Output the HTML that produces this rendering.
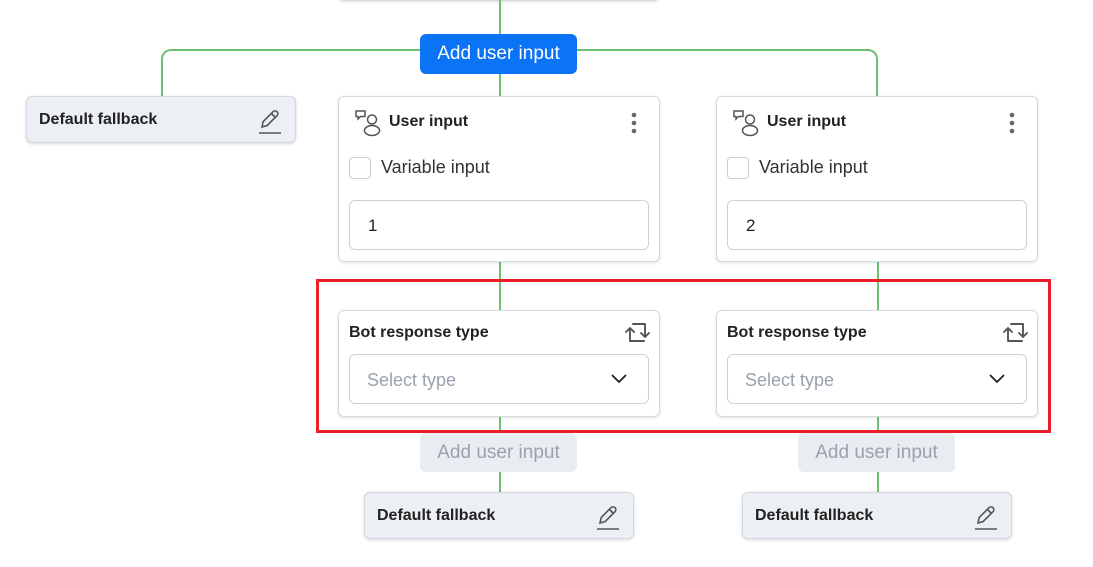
<!DOCTYPE html>
<html><head><meta charset="utf-8"><style>
*{box-sizing:border-box;margin:0;padding:0}
body{width:1093px;height:567px;background:#fff;position:relative;overflow:hidden;font-family:"Liberation Sans",sans-serif;color:#222}
.a{position:absolute}
.g{position:absolute;background:#6cc070}
.card{position:absolute;background:#fff;border:1px solid #d5d9e0;border-radius:6px;box-shadow:0 1px 3px rgba(0,0,0,.12)}
.fb{position:absolute;background:#eceff3;border:1px solid #d3d7de;border-radius:6px;box-shadow:0 1px 3px rgba(0,0,0,.15);font-weight:bold;font-size:16px;padding:14px 0 0 12px}
.fb svg{position:absolute;right:12px;top:10px}
.t{font-weight:bold;font-size:16px}
.inp{position:absolute;border:1px solid #cdd2d9;border-radius:6px;background:#fff;font-size:17px}
</style></head><body>
<div class="card" style="left:338px;top:-20px;width:322px;height:21px"></div>
<div class="g" style="left:499px;top:0;width:2px;height:35px"></div>
<div class="a" style="left:161px;top:49px;width:340px;height:48px;border:2px solid #6cc070;border-right:none;border-bottom:none;border-top-left-radius:10px"></div>
<div class="a" style="left:499px;top:49px;width:379px;height:48px;border:2px solid #6cc070;border-left:none;border-bottom:none;border-top-right-radius:10px"></div>
<div class="g" style="left:499px;top:74px;width:2px;height:22px"></div>
<div class="a" style="left:420px;top:34px;width:157px;height:40px;background:#0b73f6;border-radius:6px;color:#fff;font-size:19px;text-align:center;line-height:40px">Add user input</div>
<div class="fb" style="left:26px;top:96px;width:270px;height:47px">Default fallback<svg width="26" height="28" viewBox="0 0 26 28" fill="none" stroke="#555" stroke-width="1.6"><path d="M5 20l1.2-5.5L16 4.7a2.8 2.8 0 014 4L10.2 18.5z M14.5 6.5l4 4"/><path d="M2 26h22"/></svg></div>

<div class="g" style="left:499px;top:262px;width:2px;height:48px"></div>
<div class="g" style="left:877px;top:262px;width:2px;height:48px"></div>
<div class="g" style="left:499px;top:417px;width:2px;height:75px"></div>
<div class="g" style="left:877px;top:417px;width:2px;height:75px"></div>

<div class="card" style="left:338px;top:96px;width:322px;height:166px"></div>
<div class="card" style="left:716px;top:96px;width:322px;height:166px"></div>
<div class="card" style="left:338px;top:310px;width:322px;height:107px"></div>
<div class="card" style="left:716px;top:310px;width:322px;height:107px"></div>

<svg class="a" style="left:354px;top:109px" width="28" height="28" viewBox="0 0 28 28" fill="none" stroke="#555" stroke-width="1.5"><path d="M2 2h9v5.5H6.5L4 10V7.5H2z"/><circle cx="18" cy="10.5" r="4.5"/><ellipse cx="18" cy="21.5" rx="7.5" ry="5"/></svg>
<div class="a t" style="left:389px;top:113px">User input</div>
<svg class="a" style="left:630px;top:111px" width="8" height="24"><circle cx="4" cy="4" r="2.3" fill="#666"/><circle cx="4" cy="12" r="2.3" fill="#666"/><circle cx="4" cy="20" r="2.3" fill="#666"/></svg>
<div class="a" style="left:349px;top:157px;width:22px;height:22px;border:1.5px solid #c8cdd5;border-radius:4px"></div>
<div class="a" style="left:381px;top:157px;font-size:18px;color:#333">Variable input</div>
<div class="inp" style="left:349px;top:200px;width:300px;height:50px;padding:15px 0 0 18px">1</div>

<svg class="a" style="left:732px;top:109px" width="28" height="28" viewBox="0 0 28 28" fill="none" stroke="#555" stroke-width="1.5"><path d="M2 2h9v5.5H6.5L4 10V7.5H2z"/><circle cx="18" cy="10.5" r="4.5"/><ellipse cx="18" cy="21.5" rx="7.5" ry="5"/></svg>
<div class="a t" style="left:767px;top:113px">User input</div>
<svg class="a" style="left:1008px;top:111px" width="8" height="24"><circle cx="4" cy="4" r="2.3" fill="#666"/><circle cx="4" cy="12" r="2.3" fill="#666"/><circle cx="4" cy="20" r="2.3" fill="#666"/></svg>
<div class="a" style="left:727px;top:157px;width:22px;height:22px;border:1.5px solid #c8cdd5;border-radius:4px"></div>
<div class="a" style="left:759px;top:157px;font-size:18px;color:#333">Variable input</div>
<div class="inp" style="left:727px;top:200px;width:300px;height:50px;padding:15px 0 0 18px">2</div>

<div class="a t" style="left:349px;top:324px">Bot response type</div>
<svg class="a" style="left:624px;top:320px" width="26" height="24" viewBox="0 0 26 24" fill="none" stroke="#555" stroke-width="1.9" stroke-linejoin="round" stroke-linecap="round"><path d="M6 9v12h14M2 12l4-4 4 4M9 4h12v12M17 13l4 4 4-4"/></svg>
<div class="inp" style="left:349px;top:354px;width:300px;height:50px;padding:15px 0 0 17px;color:#99a2ad;font-size:18px">Select type</div>
<svg class="a" style="left:610px;top:373px" width="18" height="12" fill="none" stroke="#222" stroke-width="1.8"><path d="M2 2l7 7 7-7"/></svg>

<div class="a t" style="left:727px;top:324px">Bot response type</div>
<svg class="a" style="left:1002px;top:320px" width="26" height="24" viewBox="0 0 26 24" fill="none" stroke="#555" stroke-width="1.9" stroke-linejoin="round" stroke-linecap="round"><path d="M6 9v12h14M2 12l4-4 4 4M9 4h12v12M17 13l4 4 4-4"/></svg>
<div class="inp" style="left:727px;top:354px;width:300px;height:50px;padding:15px 0 0 17px;color:#99a2ad;font-size:18px">Select type</div>
<svg class="a" style="left:988px;top:373px" width="18" height="12" fill="none" stroke="#222" stroke-width="1.8"><path d="M2 2l7 7 7-7"/></svg>

<div class="a" style="left:316px;top:279px;width:735px;height:154px;border:3px solid #e8202a"></div>

<div class="a" style="left:420px;top:433px;width:157px;height:39px;background:#e9ecf0;border-radius:6px;color:#98a2b0;font-size:19px;text-align:center;line-height:40px">Add user input</div>
<div class="a" style="left:798px;top:433px;width:157px;height:39px;background:#e9ecf0;border-radius:6px;color:#98a2b0;font-size:19px;text-align:center;line-height:40px">Add user input</div>

<div class="fb" style="left:364px;top:492px;width:270px;height:47px">Default fallback<svg width="26" height="28" viewBox="0 0 26 28" fill="none" stroke="#555" stroke-width="1.6"><path d="M5 20l1.2-5.5L16 4.7a2.8 2.8 0 014 4L10.2 18.5z M14.5 6.5l4 4"/><path d="M2 26h22"/></svg></div>
<div class="fb" style="left:742px;top:492px;width:270px;height:47px">Default fallback<svg width="26" height="28" viewBox="0 0 26 28" fill="none" stroke="#555" stroke-width="1.6"><path d="M5 20l1.2-5.5L16 4.7a2.8 2.8 0 014 4L10.2 18.5z M14.5 6.5l4 4"/><path d="M2 26h22"/></svg></div>
</body></html>
